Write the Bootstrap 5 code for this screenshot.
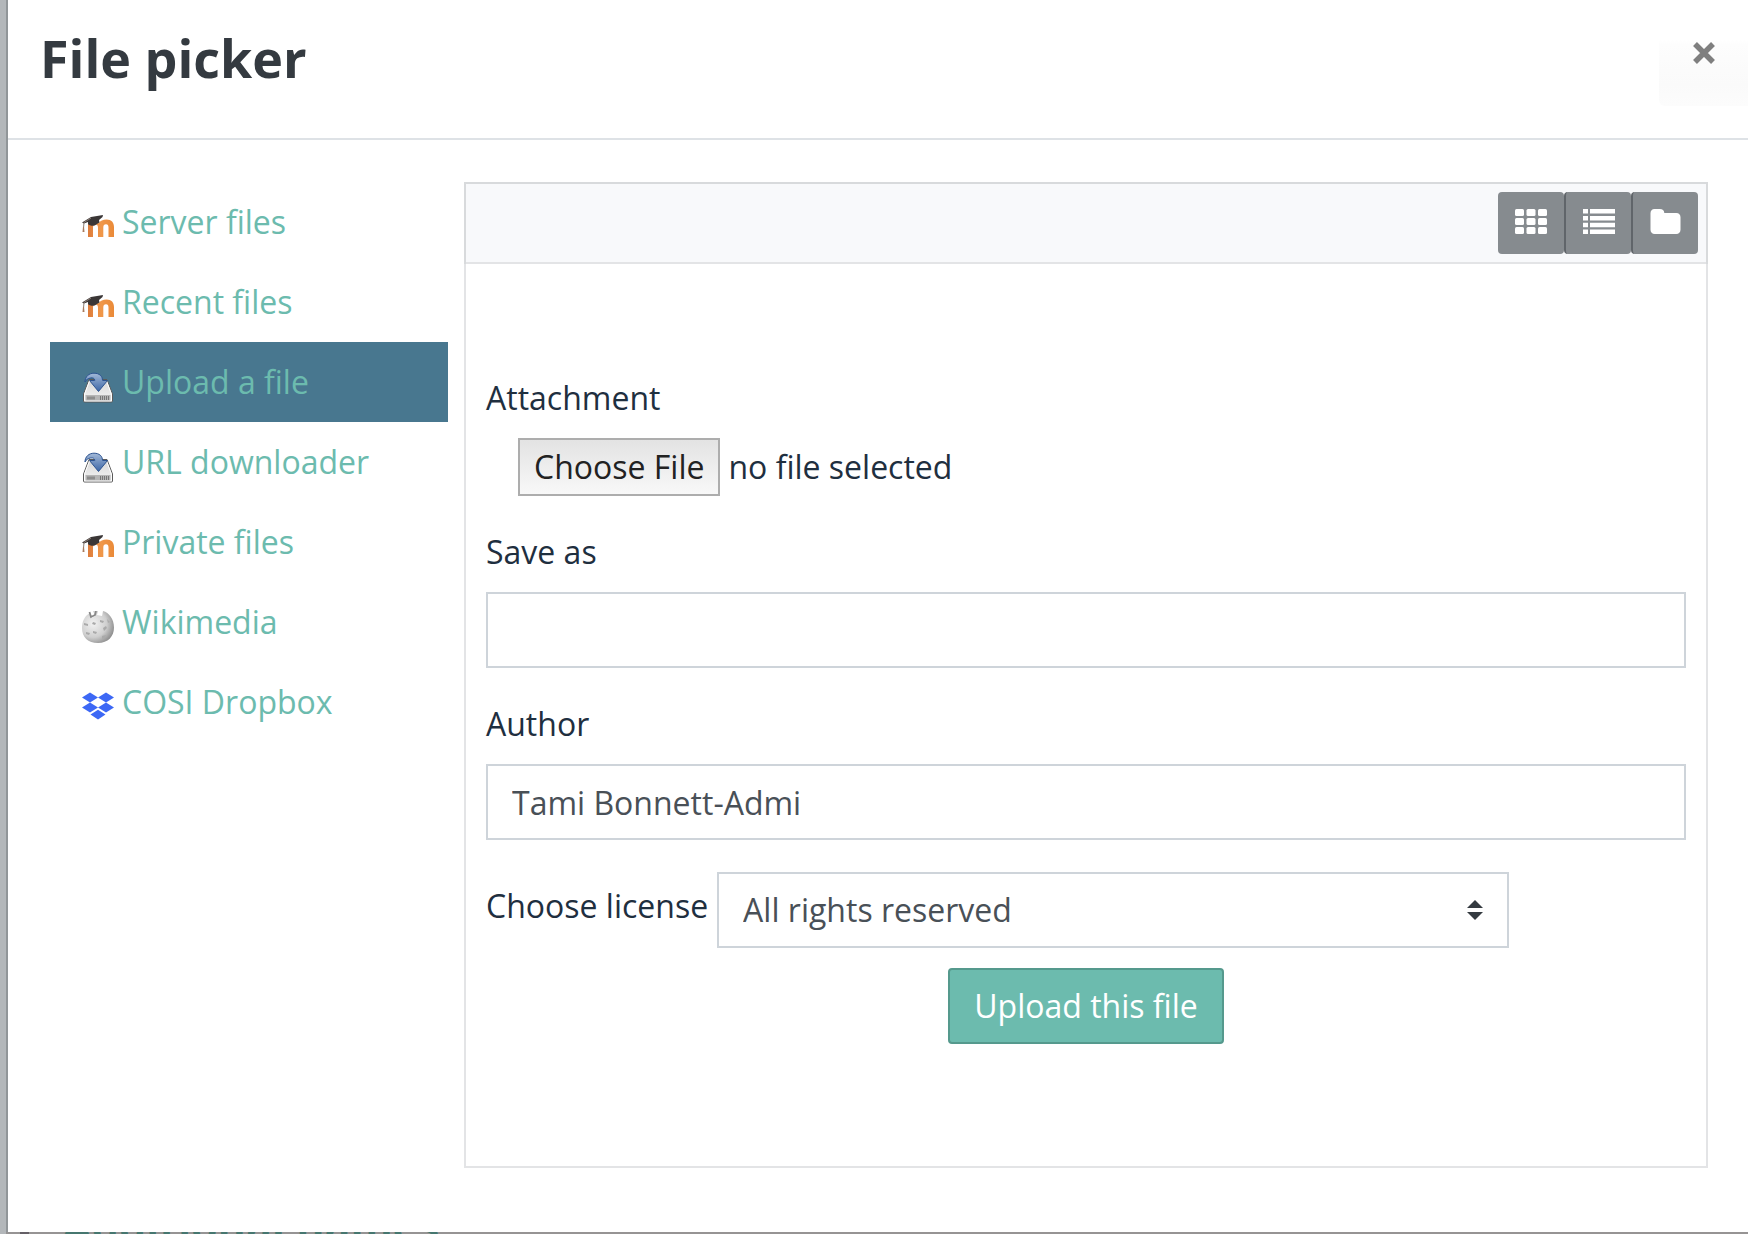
<!DOCTYPE html>
<html lang="en">
<head>
<meta charset="utf-8">
<meta name="viewport" content="width=device-width, initial-scale=1">
<title>File picker</title>
<link href="https://cdn.jsdelivr.net/npm/bootstrap@5.3.0/dist/css/bootstrap.min.css" rel="stylesheet">
<style>
  body { font-family: "Open Sans", "Noto Sans", sans-serif; font-size: 32px; line-height: 48px; color: #1f2f3f; background: #b3b7ba; }
  .picker-shell { margin-left: 6px; }
  .picker { background: #fff; border-left: 2px solid #919699; }
  .picker-head { height: 140px; border-bottom: 2px solid #dee2e6; }
  .picker-title { font-size: 52px; line-height: 72px; font-weight: 700; color: #343a40; padding: 22px 0 0 32px; }
  .picker-close { width: 89px; height: 106px; border: 0; border-radius: 0 0 0 6px; color: #7f7f7f; background: linear-gradient(#fff 38%, #fdfdfd 42%, #fafafa 80%, #fcfcfc); }
  .picker-main { padding: 42px 40px 64px 42px; gap: 16px; }
  .repo-list { width: 398px; }
  .repo-link { padding: 16px 32px; gap: 8px; color: #6cbbae; text-decoration: none; }
  .repo-link.active { background: #48778f; }
  .repo-link svg { width: 32px; height: 32px; margin-top: 10px; }
  .pane { border: 2px solid #e3e4e6; }
  .pane-bar { padding: 8px; background: #f8f9fb; border-bottom: 2px solid #e3e4e6; box-shadow: 0 -2px #d8dadc, -2px 0 #d8dadc, 2px 0 #d8dadc, -2px -2px #d8dadc, 2px -2px #d8dadc; }
  .view-btn { width: 66px; height: 62px; border: 0; border-radius: 4px; background: #868b8f; color: #fff; padding: 0; }
  .view-btn + .view-btn { width: 67px; border-left: 2px solid #60656a; }
  .upload-form { padding: 110px 20px 120px; }
  .field { margin-bottom: 32px; }
  .field-label { display: block; margin-bottom: 16px; }
  .file-row { padding-left: 32px; gap: 8px; }
  .file-btn { height: 58px; padding: 0 14px; border: 2px solid #adadad; color: #222; background: linear-gradient(#e3e3e3, #f8f8f8); }
  .text-field { height: 76px; padding: 12px 24px; border: 2px solid #ced4da; border-radius: 0; font-size: 32px; color: #495057; }
  .license-row { gap: 9px; }
  .license-select { width: 66%; height: 76px; padding: 12px 24px; border: 2px solid #ced4da; border-radius: 0; font-size: 32px; line-height: 48px; color: #495057;
    background: #fff url("data:image/svg+xml,%3Csvg xmlns='http://www.w3.org/2000/svg' viewBox='0 0 4 5'%3E%3Cpath fill='%23343a40' d='M2 0L0 2h4zm0 5L0 3h4z'/%3E%3C/svg%3E") no-repeat right 24px center/16px 20px; }
  .send-btn { height: 76px; padding: 0 24px; border: 2px solid #55998d; border-radius: 4px; background: #6cbbae; color: #fff; font-size: 32px; line-height: 48px; }
  /* slice of the page that shows below the dialog */
  .page-peek { height: 2px; overflow: hidden; background: #969494; padding-left: 14px; gap: 33px; }
  .page-peek a { margin-top: -30px; font-size: 43px; font-weight: 700; color: #46776f; text-decoration: none; white-space: nowrap; }
  .peek-caret { width: 9px; background: #645f66; }
</style>
<script src="https://cdn.jsdelivr.net/npm/bootstrap@5.3.0/dist/js/bootstrap.bundle.min.js"></script>
</head>
<body>
<svg class="position-absolute" width="0" height="0" aria-hidden="true">
  <defs>
    <linearGradient id="gOrange"><stop offset="0" stop-color="#dd7c3c"/><stop offset=".5" stop-color="#f0984a"/><stop offset="1" stop-color="#ea8a38"/></linearGradient>
    <linearGradient id="gDisk" x2="0" y2="1"><stop offset="0" stop-color="#d5d5d5"/><stop offset="1" stop-color="#f6f6f6"/></linearGradient>
    <linearGradient id="gArrow" x2="0" y2="1"><stop offset="0" stop-color="#a3b9d8"/><stop offset="1" stop-color="#3c66a6"/></linearGradient>
    <radialGradient id="gGlobe" cx=".35" cy=".4" r=".7"><stop offset="0" stop-color="#f2f2f2"/><stop offset=".6" stop-color="#cfcfcf"/><stop offset="1" stop-color="#8a8a8a"/></radialGradient>
  </defs>
  <symbol id="moodle" viewBox="0 0 32 32">
    <path fill="url(#gOrange)" d="M6 26V13h5l6-1c1-2 4-3.500 7.500-3.500C29.500 8.500 32 11.500 32 16v10h-5.500V16.500c0-2.200-.8-3.300-2.500-3.300s-2.700 1.100-2.700 3.300V26H16v-9.500c0-2-.8-3-2.500-3S11 14.500 11 16.500V26z"/>
    <path fill="#3a3636" d="M0 11.500 9 6l12-2-.5 2-3.500 3 .5 2.500c-2.500 1-4 3.300-6.500 3.300-2 0-4.500-.8-5-1.800L6 11 2 12.500z"/>
    <path fill="none" stroke="#8b7d75" stroke-width="1" d="m9 7-7 4.500L1.500 17"/>
    <path fill="#a77a5c" d="M1 16h1l.5 5H.5z"/>
  </symbol>
  <symbol id="drive" viewBox="0 0 32 32">
    <path fill="url(#gDisk)" stroke="#5a5a5a" stroke-linejoin="round" d="M7 8.500h18L30.500 23v7a1 1 0 0 1-1 1h-27a1 1 0 0 1-1-1v-7z"/>
    <path fill="none" stroke="#fff" d="M7.700 9.500h16.600l5 13.500v6.800H2.600V23z"/>
    <path fill="#b5b5b5" d="M3.500 24h25v5.500h-25z"/>
    <path fill="#8d8d8d" d="M5 25.500h8v3H5z"/>
    <path stroke="#777" d="M18.500 25v4m2-4v4m2-4v4m2-4v4m2-4v4"/>
    <path fill="url(#gArrow)" stroke="#2c5390" stroke-linejoin="round" d="M3 11C3 5.500 7 2.200 12 2.200c5.500 0 8.500 3 8.500 7.300h5L16.500 20.500 7.500 9.500h5.300C12.800 7.500 11 6.500 8.500 7 6 7.400 4 8.800 3 11z"/>
  </symbol>
  <symbol id="globe" viewBox="0 0 32 32">
    <path fill="url(#gGlobe)" d="M7 2.500 10 7l3-2-2-5h5l-1 4 5 1 1-5c6 1.500 11 8 11 16.500C32 25.500 26 32 16 32S0 26 0 17C0 10.500 2.500 5.500 7 2.500z"/>
    <path fill="none" stroke="#888" stroke-width="1.800" d="m7.500 1 1.500 5 4-2 1-4"/>
    <path fill="#aaa" d="m18 9 4 1-1 2-3-1zM11 11l3 1-1 2-3-1zM2 12l4 1v2l-4-1zM21 17l3-2 1 2-3 3zM11 20l4 1-1 2-3-1zM4 21l4 1-1 2-3-1zM20 25l4-1-1 3-3 1zM25 8l3 3-2 1z"/>
  </symbol>
  <symbol id="dropbox" viewBox="0 0 32 32">
    <path fill="#3d68f5" d="m8 1.500 8 5-8 5-8-5zm16 0 8 5-8 5-8-5zM8 11.500l8 5-8 5-8-5zm16 0 8 5-8 5-8-5zM8.500 23.500l7.500-4.700 7.500 4.700-7.500 5z"/>
  </symbol>
</svg>

<div class="picker-shell d-flex flex-column min-vh-100">
  <div class="picker d-flex flex-column flex-grow-1" role="dialog" aria-labelledby="pickerTitle">
    <header class="picker-head d-flex justify-content-between align-items-start">
      <h1 class="picker-title m-0" id="pickerTitle">File picker</h1>
      <button type="button" class="picker-close p-0 d-flex align-items-center justify-content-center" aria-label="Close">
        <svg width="22" height="22" viewBox="0 0 22 22" aria-hidden="true"><path fill="none" stroke="currentColor" stroke-width="5.500" stroke-linejoin="round" d="m2 2 18 18M20 2 2 20"/></svg>
      </button>
    </header>

    <div class="picker-main d-flex flex-grow-1">
      <nav class="repo-list flex-shrink-0 d-flex flex-column">
        <a href="#" class="repo-link d-flex align-items-center"><svg aria-hidden="true"><use href="#moodle"/></svg><span>Server files</span></a>
        <a href="#" class="repo-link d-flex align-items-center"><svg aria-hidden="true"><use href="#moodle"/></svg><span>Recent files</span></a>
        <a href="#" class="repo-link d-flex align-items-center active" aria-current="true"><svg aria-hidden="true"><use href="#drive"/></svg><span>Upload a file</span></a>
        <a href="#" class="repo-link d-flex align-items-center"><svg aria-hidden="true"><use href="#drive"/></svg><span>URL downloader</span></a>
        <a href="#" class="repo-link d-flex align-items-center"><svg aria-hidden="true"><use href="#moodle"/></svg><span>Private files</span></a>
        <a href="#" class="repo-link d-flex align-items-center"><svg aria-hidden="true"><use href="#globe"/></svg><span>Wikimedia</span></a>
        <a href="#" class="repo-link d-flex align-items-center"><svg aria-hidden="true"><use href="#dropbox"/></svg><span>COSI Dropbox</span></a>
      </nav>

      <section class="pane flex-grow-1">
        <div class="pane-bar d-flex justify-content-end">
          <button type="button" class="view-btn d-flex align-items-center justify-content-center" aria-label="Display as icons">
            <svg width="32" height="30" viewBox="0 0 32 30" fill="currentColor" aria-hidden="true"><rect y="1" width="9" height="7" rx="1.500"/><rect x="11.500" y="1" width="9" height="7" rx="1.500"/><rect x="23" y="1" width="9" height="7" rx="1.500"/><rect y="10" width="9" height="7" rx="1.500"/><rect x="11.500" y="10" width="9" height="7" rx="1.500"/><rect x="23" y="10" width="9" height="7" rx="1.500"/><rect y="19" width="9" height="7" rx="1.500"/><rect x="11.500" y="19" width="9" height="7" rx="1.500"/><rect x="23" y="19" width="9" height="7" rx="1.500"/></svg>
          </button>
          <button type="button" class="view-btn d-flex align-items-center justify-content-center" aria-label="Display as list">
            <svg width="32" height="30" viewBox="0 0 32 30" fill="currentColor" aria-hidden="true"><path d="M0 1h5v4.500H0zm7 0h25v4.500H7zM0 8h5v4.500H0zm7 0h25v4.500H7zM0 14.800h5v4.500H0zm7 0h25v4.500H7zM0 21.500h5V26H0zm7 0h25V26H7z"/></svg>
          </button>
          <button type="button" class="view-btn d-flex align-items-center justify-content-center" aria-label="Display as folders">
            <svg width="31" height="30" viewBox="0 0 31 30" fill="currentColor" aria-hidden="true"><path d="M4.500 1h5.300C12.500 1 14.300 2.500 14.300 5h12C29 5 30.500 6.800 30.500 9.300v12.400c0 2.600-1.700 4.300-4.200 4.300H4.700C2.200 26 .5 24.300.5 21.700V5.200C.5 2.700 2 1 4.500 1z"/></svg>
          </button>
        </div>

        <form class="upload-form">
          <div class="field">
            <label class="field-label" for="attachment">Attachment</label>
            <div class="file-row d-flex align-items-center">
              <button type="button" class="file-btn" onclick="document.getElementById('attachment').click()">Choose File</button>
              <span>no file selected</span>
              <input type="file" id="attachment" class="visually-hidden" tabindex="-1">
            </div>
          </div>
          <div class="field">
            <label class="field-label" for="saveas">Save as</label>
            <input type="text" class="form-control text-field" id="saveas">
          </div>
          <div class="field">
            <label class="field-label" for="author">Author</label>
            <input type="text" class="form-control text-field" id="author" value="Tami Bonnett-Admi">
          </div>
          <div class="license-row d-flex align-items-center">
            <label class="mb-2 text-nowrap" for="license">Choose license</label>
            <select class="form-select license-select" id="license"><option>All rights reserved</option></select>
          </div>
          <div class="d-flex justify-content-center pt-3 mt-1">
            <button type="submit" class="btn send-btn">Upload this file</button>
          </div>
        </form>
      </section>
    </div>
  </div>
  <div class="page-peek d-flex align-items-start">
    <span class="peek-caret align-self-stretch"></span>
    <a href="#">Additional names</a>
  </div>
</div>
</body>
</html>
